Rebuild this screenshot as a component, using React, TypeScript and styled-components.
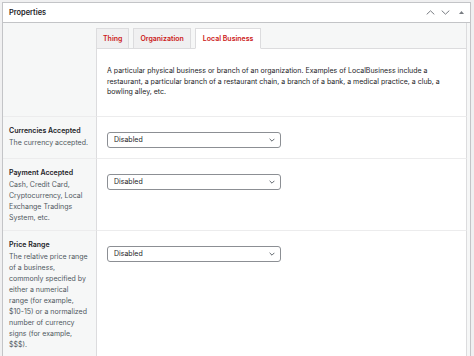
import * as React from 'react';
import styled, { createGlobalStyle } from 'styled-components';

const colors = {
  page: '#f0f0f1',
  border: '#c3c4c7',
  softBorder: '#dcdcde',
  rowLine: '#ececed',
  side: '#f6f7f7',
  text: '#1d2327',
  muted: '#50575e',
  red: '#cc1818',
  icon: '#787c82',
};

const GlobalStyle = createGlobalStyle`
  html, body {
    margin: 0;
    padding: 0;
    background: ${colors.page};
  }
  body {
    font-family: Inter, "Liberation Sans", Arial, sans-serif;
    font-size: 7px;
    color: ${colors.text};
  }
`;

const Panel = styled.section`
  box-sizing: border-box;
  width: 469px;
  margin: 2px 0 0 2px;
  background: #fff;
  border: 1px solid ${colors.border};
  border-bottom: none;
`;

const Header = styled.header`
  height: 19px;
  display: flex;
  align-items: center;
  justify-content: space-between;
  padding: 0 6px;
  border-bottom: 1px solid ${colors.border};
`;

const Title = styled.h2`
  margin: 0;
  font-size: 7.4px;
  font-weight: 600;
`;

const HeaderActions = styled.div`
  display: flex;
  align-items: center;
  gap: 6px;
  color: ${colors.icon};
`;

const Toggle = styled.svg`
  margin-left: 3px;
`;

const Body = styled.div`
  display: grid;
  grid-template-columns: 93px 1fr;
  background: ${colors.side};
  padding-right: 3px;
`;

const SideCell = styled.div<{ $first?: boolean }>`
  padding: 8px 5px 7px 6px;
  border-top: ${(p) => (p.$first ? 'none' : `1px solid ${colors.rowLine}`)};
  line-height: 11px;
`;

const TabBar = styled.div`
  display: flex;
  gap: 4px;
  padding-top: 5px;
  border-bottom: 1px solid ${colors.softBorder};
  border-right: 1px solid ${colors.softBorder};
`;

const Tab = styled.div<{ $active?: boolean }>`
  height: 19px;
  display: flex;
  align-items: center;
  padding: 0 ${(p) => (p.$active ? 7 : 6)}px;
  margin-bottom: -1px;
  font-weight: 600;
  color: ${colors.red};
  background: ${(p) => (p.$active ? '#fff' : '#f0f0f1')};
  border: 1px solid ${colors.softBorder};
  border-bottom-color: ${(p) => (p.$active ? '#fff' : colors.softBorder)};
`;

const MainCell = styled.div<{ $first?: boolean }>`
  background: #fff;
  padding: 8px 10px 7px;
  border-left: 1px solid ${colors.softBorder};
  border-right: 1px solid ${colors.softBorder};
  border-top: ${(p) => (p.$first ? 'none' : `1px solid ${colors.rowLine}`)};
`;

const Intro = styled(MainCell)`
  padding: 17px 14px 18px 10px;
  line-height: 10.5px;
`;

const Label = styled.div`
  font-weight: 600;
  white-space: nowrap;
`;

const Hint = styled.div`
  color: ${colors.muted};
  margin-top: 1px;
`;

const NoWrap = styled.span`
  white-space: nowrap;
`;

const SelectWrap = styled.div`
  position: relative;
  width: 174px;
  margin: 7px 0 3px;
`;

const Select = styled.select`
  box-sizing: border-box;
  width: 100%;
  height: 16px;
  padding: 0 16px 0 6px;
  appearance: none;
  font-family: inherit;
  font-size: 7px;
  color: ${colors.text};
  background: #fff;
  border: 1px solid #8c8f94;
  border-radius: 3px;
`;

const Chevron = styled.svg`
  position: absolute;
  right: 6px;
  top: 6px;
  pointer-events: none;
`;

const fields: { label: string; hint: React.ReactNode }[] = [
  {
    label: 'Currencies Accepted',
    hint: 'The currency accepted.',
  },
  {
    label: 'Payment Accepted',
    hint: 'Cash, Credit Card, Cryptocurrency, Local Exchange Tradings System, etc.',
  },
  {
    label: 'Price Range',
    hint: (
      <>
        The relative price range of a business, commonly specified by either a numerical{' '}
        <NoWrap>range (for</NoWrap> example, <NoWrap>$10-15)</NoWrap> or a normalized number of
        currency signs (for example, $$$).
      </>
    ),
  },
];

const tabs = ['Thing', 'Organization', 'Local Business'];

const App = () => (
  <>
    <GlobalStyle />
    <Panel>
      <Header>
        <Title>Properties</Title>
        <HeaderActions>
          <svg width="9" height="5" viewBox="0 0 9 5" fill="none">
            <path d="M0.7 4.4 4.5 0.8 8.3 4.4" stroke="currentColor" strokeWidth="1" />
          </svg>
          <svg width="9" height="5" viewBox="0 0 9 5" fill="none">
            <path d="M0.7 0.6 4.5 4.2 8.3 0.6" stroke="currentColor" strokeWidth="1" />
          </svg>
          <Toggle width="5" height="3" viewBox="0 0 5 3">
            <path d="M0 3 2.5 0 5 3Z" fill="currentColor" />
          </Toggle>
        </HeaderActions>
      </Header>
      <Body>
        <SideCell $first />
        <TabBar>
          {tabs.map((t) => (
            <Tab key={t} $active={t === 'Local Business'}>
              {t}
            </Tab>
          ))}
        </TabBar>
        <SideCell $first />
        <Intro $first>
          A particular physical business or branch of an organization. Examples of LocalBusiness
          include a restaurant, a particular branch of a restaurant chain, a branch of a bank, a
          medical practice, a club, a bowling alley, etc.
        </Intro>
        {fields.map((f) => (
          <React.Fragment key={f.label}>
            <SideCell>
              <Label>{f.label}</Label>
              <Hint>{f.hint}</Hint>
            </SideCell>
            <MainCell>
              <SelectWrap>
                <Select defaultValue="disabled">
                  <option value="disabled">Disabled</option>
                </Select>
                <Chevron width="6" height="4" viewBox="0 0 6 4" fill="none">
                  <path d="M0.6 0.8 3 3.2 5.4 0.8" stroke="#50575e" strokeWidth="0.9" />
                </Chevron>
              </SelectWrap>
            </MainCell>
          </React.Fragment>
        ))}
      </Body>
    </Panel>
  </>
);

export default App;
